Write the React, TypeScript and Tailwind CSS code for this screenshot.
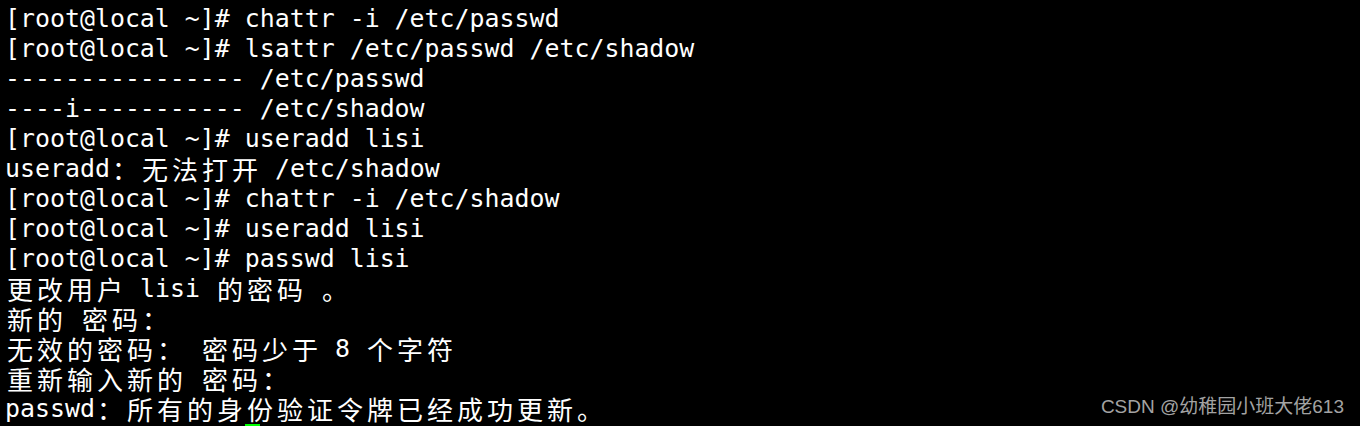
const lines = [
  "[root@local ~]# chattr -i /etc/passwd",
  "[root@local ~]# lsattr /etc/passwd /etc/shadow",
  "---------------- /etc/passwd",
  "----i----------- /etc/shadow",
  "[root@local ~]# useradd lisi",
  "useradd：无法打开 /etc/shadow",
  "[root@local ~]# chattr -i /etc/shadow",
  "[root@local ~]# useradd lisi",
  "[root@local ~]# passwd lisi",
  "更改用户 lisi 的密码 。",
  "新的 密码：",
  "无效的密码： 密码少于 8 个字符",
  "重新输入新的 密码：",
  "passwd：所有的身份验证令牌已经成功更新。",
];

const wide = /[\u3000-\u9fff\uff00-\uffef]/;

// split a line into runs of narrow text and single wide cells
const toRuns = (line: string) => {
  const runs: { text: string; wide: boolean }[] = [];
  for (const ch of line) {
    const isWide = wide.test(ch);
    const last = runs[runs.length - 1];
    if (!isWide && last && !last.wide) last.text += ch;
    else runs.push({ text: ch, wide: isWide });
  }
  return runs;
};

const TermLine = ({ line }: { line: string }) => (
  <div className="h-[30px] leading-[30px] whitespace-pre">
    {toRuns(line).map((r, i) =>
      r.wide ? (
        <span
          key={i}
          className="inline-block h-[30px] w-[30px] text-center align-top font-['Noto_Sans_CJK_SC',sans-serif] text-[26px] leading-[30px]"
        >
          {r.text}
        </span>
      ) : (
        <span key={i}>{r.text}</span>
      )
    )}
  </div>
);

const App = () => {
  return (
    <div className="relative h-[426px] w-[1360px] overflow-hidden bg-black">
      <div className="pt-[4px] pl-[5px] font-['DejaVu_Sans_Mono',monospace] text-[24.9px] text-white">
        {lines.map((l, i) => (
          <TermLine key={i} line={l} />
        ))}
        <div className="h-[30px] whitespace-pre">
          <span className="inline-block w-[240px]" />
          <span className="inline-block h-[30px] w-[15px] bg-[#00ff00]" />
        </div>
      </div>
      <div className="absolute right-[16px] bottom-[8px] font-['Liberation_Sans','Noto_Sans_CJK_SC',sans-serif] text-[19px] leading-[22px] text-[#a3a3a3]">
        CSDN @幼稚园小班大佬613
      </div>
    </div>
  );
};

export default App;
